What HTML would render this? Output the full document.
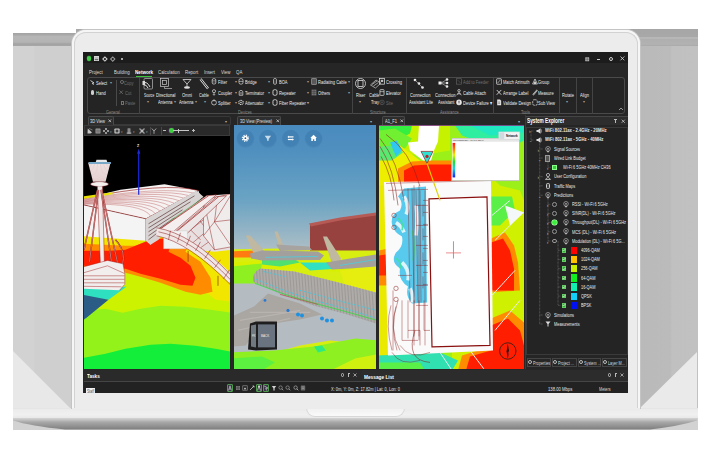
<!DOCTYPE html>
<html><head><meta charset="utf-8">
<style>
*{box-sizing:border-box;margin:0;padding:0}
html,body{width:710px;height:459px;overflow:hidden;background:#fff}
body{position:relative;font-family:"Liberation Sans",sans-serif}
.a{position:absolute}
.t{position:absolute;white-space:nowrap;color:#e6e6e6;font-size:5px;line-height:5px}
svg{position:absolute;overflow:visible}
</style></head><body>

<div class="a" style="left:13px;top:33.2px;width:75px;height:397px;background:linear-gradient(90deg,#d2d2d2 0,#d2d2d2 28%,#cfcfcf 29%,#cfcfcf 100%)"></div>
<div class="a" style="left:13px;top:33.2px;width:75px;height:13px;background:linear-gradient(180deg,#a3a3a3 0,#a9a9a9 15%,#b6b6b6 25%,#b4b4b4 70%,#a2a2a2 85%,#a8a8a8 100%)"></div>
<div class="a" style="left:75.5px;top:28.8px;width:12px;height:5px;background:#a9a9a9"></div>
<svg style="left:13px;top:351px" width="60" height="58"><polygon points="0,0 57,57 0,57" fill="#e8e8e8"/></svg>
<div class="a" style="left:625px;top:29px;width:73px;height:401px;background:linear-gradient(90deg,#b9b9b9 0,#bbbbbb 63%,#c0c0c0 64%,#c1c1c1 100%)"></div>
<div class="a" style="left:625px;top:29px;width:73px;height:16.5px;background:linear-gradient(180deg,#a6a6a6 0,#a8a8a8 45%,#bdbdbd 52%,#afafaf 60%,#b2b2b2 90%,#a9a9a9 100%)"></div>
<svg style="left:640px;top:352px" width="58" height="57"><polygon points="57,0 57,56 0,56" fill="#eaeaea"/></svg>
<div class="a" style="left:13px;top:407.5px;width:685px;height:11.5px;background:linear-gradient(180deg,#e2e2e2 0,#ececec 15%,#f0f0f0 60%,#e6e6e6 100%)"></div>
<div class="a" style="left:13px;top:419px;width:685px;height:11px;background:#d2d2d2"></div>
<svg style="left:0;top:0" width="710" height="459"><defs><linearGradient id="bg1" x1="0" y1="0" x2="0" y2="1"><stop offset="0" stop-color="#cccccc"/><stop offset="0.3" stop-color="#a8a8a8"/><stop offset="1" stop-color="#7e7e7e"/></linearGradient></defs>
<path d="M13,419 H697 V420.5 Q680,426 650,429.5 H65 Q30,426 13,420.5 Z" fill="url(#bg1)"/></svg>
<div class="a" style="left:13px;top:418.3px;width:685px;height:0.9px;background:#d0d0d0"></div>
<div class="a" style="left:306px;top:408px;width:98.5px;height:8.5px;background:linear-gradient(180deg,#f0f0f0,#fafafa);border:0.6px solid #d8d8d8;border-top:none;border-radius:0 0 9px 9px"></div>
<div class="a" style="left:71px;top:29px;width:570px;height:380px;background:#ececec;border:1px solid #c4c4c4;border-bottom:none;border-radius:15px 15px 0 0"></div>
<div class="a" style="left:72px;top:30px;width:568px;height:378px;border:2px solid #f6f6f6;border-bottom:none;border-radius:14px 14px 0 0"></div>
<div class="a" style="left:74px;top:32px;width:564px;height:376px;border:0.8px solid #d2d2d2;border-bottom:none;border-radius:12px 12px 0 0"></div>
<div class="a" style="left:83px;top:52px;width:545px;height:341px;background:#232323"></div>
<div class="a" style="left:83px;top:52px;width:545px;height:11px;background:#1c1c1c;"></div><div class="a" style="left:83px;top:63px;width:545px;height:51px;background:#262626;"></div>
<div class="a" style="left:86.6px;top:56.4px;width:4.8px;height:4.8px;border-radius:50%;background:#44d04c;box-shadow:0 0 0 0.4px #2a6a2a"></div>
<div class="a" style="left:94.3px;top:56px;width:4.3px;height:5.3px;background:#bdbdbd;border-radius:0.5px;box-shadow:inset 0 0 0 0.7px #e0e0e0, inset 0 -1.6px 0 0.2px #555"></div>
<div class="a" style="left:102.6px;top:56.8px;width:3.8px;height:3.8px;border:1px solid #d8d8d8;transform:rotate(45deg)"></div>
<div class="a" style="left:110.8px;top:57px;width:3.5px;height:3.5px;border:0.8px solid #9a9a9a;transform:rotate(45deg)"></div>
<div class="a" style="left:121px;top:58px;width:1.5px;height:1.5px;background:#aaa"></div>
<svg style="left:584.5px;top:56.8px" width="4.5" height="4.5"><rect x="0.2" y="0.2" width="4" height="4" rx="0.5" fill="#b0b0b0"/><path d="M0.2,2.2 H4.2 M2.2,0.2 V4.2" stroke="#333" stroke-width="0.4"/></svg>
<div class="a" style="left:596.5px;top:58.5px;width:3px;height:0.8px;background:#ccc"></div>
<div class="a" style="left:608.6px;top:56.8px;width:4.2px;height:4.2px;border:1.1px solid #d0d0d0;border-radius:50%"></div>
<svg style="left:620.1px;top:56.4px" width="4.8" height="4.8" viewBox="-2.4 -2.4 4.8 4.8"><path d="M-1.9,-1.9 L1.9,1.9 M1.9,-1.9 L-1.9,1.9" stroke="#ddd" stroke-width="0.8"/></svg><div class="t" style="left:89px;top:68.50px;font-size:6.20px;line-height:6.20px;color:#dcdcdc;transform:scaleX(0.710);transform-origin:0 50%;">Project</div><div class="t" style="left:114px;top:68.50px;font-size:6.20px;line-height:6.20px;color:#dcdcdc;transform:scaleX(0.710);transform-origin:0 50%;">Building</div><div class="t" style="left:158px;top:68.50px;font-size:6.20px;line-height:6.20px;color:#dcdcdc;transform:scaleX(0.710);transform-origin:0 50%;">Calculation</div><div class="t" style="left:185px;top:68.50px;font-size:6.20px;line-height:6.20px;color:#dcdcdc;transform:scaleX(0.710);transform-origin:0 50%;">Report</div><div class="t" style="left:204px;top:68.50px;font-size:6.20px;line-height:6.20px;color:#dcdcdc;transform:scaleX(0.710);transform-origin:0 50%;">Insert</div><div class="t" style="left:221px;top:68.50px;font-size:6.20px;line-height:6.20px;color:#dcdcdc;transform:scaleX(0.710);transform-origin:0 50%;">View</div><div class="t" style="left:236px;top:68.50px;font-size:6.20px;line-height:6.20px;color:#dcdcdc;transform:scaleX(0.710);transform-origin:0 50%;">QA</div><div class="t" style="left:135px;top:68.50px;font-size:6.20px;line-height:6.20px;color:#ffffff;font-weight:bold;transform:scaleX(0.745);transform-origin:0 50%;">Network</div><div class="a" style="left:135.5px;top:75.6px;width:16px;height:1.1px;background:#3cc43c;"></div><div class="a" style="left:87px;top:77px;width:538px;height:37.3px;background:#242424;border:0.9px solid #4a4a4a;border-radius:3px;"></div><div class="a" style="left:138.5px;top:78px;width:0.8px;height:35.5px;background:#444;"></div><div class="a" style="left:352px;top:78px;width:0.8px;height:35.5px;background:#444;"></div><div class="a" style="left:406px;top:78px;width:0.8px;height:35.5px;background:#444;"></div><div class="a" style="left:492.5px;top:78px;width:0.8px;height:35.5px;background:#444;"></div><div class="a" style="left:559px;top:78px;width:0.8px;height:35.5px;background:#444;"></div><div class="a" style="left:576px;top:78px;width:0.8px;height:35.5px;background:#444;"></div><div class="a" style="left:592px;top:78px;width:0.8px;height:35.5px;background:#444;"></div><div class="a" style="left:116px;top:80px;width:0.8px;height:26px;background:#4a4a4a;"></div><svg style="left:90px;top:80px" width="5" height="5"><path d="M0.5,0.5 L4,3 L2.3,3.2 L3.5,4.8" fill="none" stroke="#ddd" stroke-width="0.9"/></svg><div class="t" style="left:95.5px;top:80.55px;font-size:5.70px;line-height:5.70px;color:#ececec;transform:scaleX(0.710);transform-origin:0 50%;">Select</div><div class="t" style="left:109.5px;top:81.68px;font-size:3.5px;line-height:3.5px;letter-spacing:-0.15px;color:#9a9a9a;">&#9662;</div><div class="a" style="left:90.5px;top:90px;width:3.5px;height:4.5px;border-radius:1.5px;background:#d0d0d0"></div><div class="t" style="left:96px;top:90.85px;font-size:5.70px;line-height:5.70px;color:#ececec;transform:scaleX(0.710);transform-origin:0 50%;">Hand</div><div class="a" style="left:120px;top:80px;width:3.8px;height:3.8px;border:0.8px solid #707070;border-radius:50%;"></div><div class="t" style="left:124px;top:80.55px;font-size:5.70px;line-height:5.70px;color:#707070;transform:scaleX(0.710);transform-origin:0 50%;">Copy</div><svg style="left:119.3px;top:90.0px" width="4.4" height="4.4" viewBox="-2.2 -2.2 4.4 4.4"><path d="M-1.7,-1.7 L1.7,1.7 M1.7,-1.7 L-1.7,1.7" stroke="#707070" stroke-width="0.8"/></svg><div class="t" style="left:125px;top:90.85px;font-size:5.70px;line-height:5.70px;color:#707070;transform:scaleX(0.710);transform-origin:0 50%;">Cut</div><div class="a" style="left:120.5px;top:100.8px;width:3.5px;height:3.8px;border:0.8px solid #707070;"></div><div class="t" style="left:125px;top:101.25px;font-size:5.70px;line-height:5.70px;color:#707070;transform:scaleX(0.710);transform-origin:0 50%;">Paste</div><div class="t" style="left:106px;top:109.67px;font-size:5.46px;line-height:5.46px;color:#8a8a8a;transform:scaleX(0.710);transform-origin:0 50%;">General</div><svg style="left:142px;top:78px" width="11" height="12"><rect x="2" y="0.5" width="8.5" height="10.5" rx="1" fill="none" stroke="#bbb" stroke-width="0.7"/><path d="M1,5 Q5,3 8,9 M2,7 Q4,6 6,10" fill="none" stroke="#e0e0e0" stroke-width="1"/><rect x="0.5" y="3" width="2.5" height="4" fill="#ddd"/></svg><div class="t" style="left:143.9px;top:93.35px;font-size:5.70px;line-height:5.70px;color:#ececec;transform:scaleX(0.570);transform-origin:0 50%;">Source</div><div class="t" style="left:146.5px;top:100.68px;font-size:3.5px;line-height:3.5px;letter-spacing:-0.15px;color:#9a9a9a;">&#9662;</div><svg style="left:160px;top:78px" width="14" height="12"><rect x="0.5" y="0.5" width="8" height="8" fill="none" stroke="#ccc" stroke-width="0.7"/><rect x="2.5" y="2.5" width="4" height="4" fill="none" stroke="#ccc" stroke-width="0.7"/><path d="M4.5,8.5 V10.5 H12" stroke="#bbb" stroke-width="0.7" fill="none"/></svg><div class="t" style="left:156.4px;top:93.35px;font-size:5.70px;line-height:5.70px;color:#ececec;transform:scaleX(0.727);transform-origin:0 50%;">Directional</div><div class="t" style="left:157.5px;top:99.55px;font-size:5.70px;line-height:5.70px;color:#ececec;transform:scaleX(0.682);transform-origin:0 50%;">Antenna</div><div class="t" style="left:174px;top:100.68px;font-size:3.5px;line-height:3.5px;letter-spacing:-0.15px;color:#9a9a9a;">&#9662;</div><svg style="left:182px;top:78px" width="11" height="12"><path d="M1,1.5 H9 L5,6 Z" fill="none" stroke="#ddd" stroke-width="0.8"/><path d="M5,6 V9" stroke="#ddd" stroke-width="0.8"/><ellipse cx="5" cy="9.5" rx="3" ry="1.3" fill="#ddd"/></svg><div class="t" style="left:181.5px;top:93.35px;font-size:5.70px;line-height:5.70px;color:#ececec;transform:scaleX(0.734);transform-origin:0 50%;">Omni</div><div class="t" style="left:178.5px;top:99.55px;font-size:5.70px;line-height:5.70px;color:#ececec;transform:scaleX(0.682);transform-origin:0 50%;">Antenna</div><div class="t" style="left:195px;top:100.68px;font-size:3.5px;line-height:3.5px;letter-spacing:-0.15px;color:#9a9a9a;">&#9662;</div><svg style="left:199px;top:78px" width="11" height="12"><path d="M1.5,1 L9,10.5" stroke="#ddd" stroke-width="2.4"/><path d="M1.5,1 L9,10.5" stroke="#262626" stroke-width="1"/></svg><div class="t" style="left:199.3px;top:93.35px;font-size:5.70px;line-height:5.70px;color:#ececec;transform:scaleX(0.671);transform-origin:0 50%;">Cable</div><div class="t" style="left:203.5px;top:100.68px;font-size:3.5px;line-height:3.5px;letter-spacing:-0.15px;color:#9a9a9a;">&#9662;</div><svg style="left:210.9px;top:78.1px" width="6" height="7" viewBox="0 0 5 5.8"><rect x="1" y="0.5" width="3" height="4.5" rx="1.2" fill="none" stroke="#dedede" stroke-width="0.6"/><path d="M1,2 H4 M1,3.3 H4" stroke="#c0c0c0" stroke-width="0.4"/></svg><div class="t" style="left:218px;top:80.05px;font-size:5.70px;line-height:5.70px;color:#ececec;transform:scaleX(0.710);transform-origin:0 50%;">Filter</div><div class="t" style="left:235px;top:81.18px;font-size:3.5px;line-height:3.5px;letter-spacing:-0.15px;color:#9a9a9a;">&#9662;</div><svg style="left:210.9px;top:88.6px" width="6" height="7" viewBox="0 0 5 5.8"><circle cx="2.5" cy="1.8" r="1.3" fill="none" stroke="#dedede" stroke-width="0.6"/><path d="M2.5,3 V5.2 M1.5,4.2 L2.5,5.2 L3.5,4.2" stroke="#dedede" stroke-width="0.5" fill="none"/></svg><div class="t" style="left:218px;top:90.55px;font-size:5.70px;line-height:5.70px;color:#ececec;transform:scaleX(0.710);transform-origin:0 50%;">Coupler</div><div class="t" style="left:235px;top:91.68px;font-size:3.5px;line-height:3.5px;letter-spacing:-0.15px;color:#9a9a9a;">&#9662;</div><svg style="left:210.9px;top:98.89999999999999px" width="6" height="7" viewBox="0 0 5 5.8"><circle cx="2.5" cy="3" r="2" fill="none" stroke="#dedede" stroke-width="0.6"/><path d="M2.5,0.3 V2" stroke="#dedede" stroke-width="0.6"/></svg><div class="t" style="left:218px;top:100.85px;font-size:5.70px;line-height:5.70px;color:#ececec;transform:scaleX(0.710);transform-origin:0 50%;">Splitter</div><div class="t" style="left:235px;top:101.98px;font-size:3.5px;line-height:3.5px;letter-spacing:-0.15px;color:#9a9a9a;">&#9662;</div><svg style="left:238.4px;top:78.1px" width="6" height="7" viewBox="0 0 5 5.8"><rect x="0.8" y="0.5" width="3.4" height="4.6" rx="1.5" fill="none" stroke="#dedede" stroke-width="0.6"/><path d="M0.8,2.8 H4.2" stroke="#dedede" stroke-width="0.5"/></svg><div class="t" style="left:245px;top:80.05px;font-size:5.70px;line-height:5.70px;color:#ececec;transform:scaleX(0.710);transform-origin:0 50%;">Bridge</div><div class="t" style="left:268px;top:81.18px;font-size:3.5px;line-height:3.5px;letter-spacing:-0.15px;color:#9a9a9a;">&#9662;</div><svg style="left:238.4px;top:88.6px" width="6" height="7" viewBox="0 0 5 5.8"><path d="M1,5.2 V2 Q2.5,0 4,2 V5.2 Z" fill="none" stroke="#dedede" stroke-width="0.6"/><path d="M2.5,2.5 V4.5" stroke="#dedede" stroke-width="0.6"/></svg><div class="t" style="left:245px;top:90.55px;font-size:5.70px;line-height:5.70px;color:#ececec;transform:scaleX(0.710);transform-origin:0 50%;">Terminator</div><div class="t" style="left:268px;top:91.68px;font-size:3.5px;line-height:3.5px;letter-spacing:-0.15px;color:#9a9a9a;">&#9662;</div><svg style="left:238.4px;top:98.89999999999999px" width="6" height="7" viewBox="0 0 5 5.8"><circle cx="2.5" cy="2.8" r="1.8" fill="none" stroke="#dedede" stroke-width="0.9" stroke-dasharray="0.8,0.5"/><circle cx="2.5" cy="2.8" r="0.6" fill="#dedede"/></svg><div class="t" style="left:245px;top:100.85px;font-size:5.70px;line-height:5.70px;color:#ececec;transform:scaleX(0.710);transform-origin:0 50%;">Attenuator</div><div class="t" style="left:268px;top:101.98px;font-size:3.5px;line-height:3.5px;letter-spacing:-0.15px;color:#9a9a9a;">&#9662;</div><svg style="left:272.40000000000003px;top:78.1px" width="6" height="7" viewBox="0 0 5 5.8"><rect x="1.3" y="0.4" width="2.4" height="4.8" rx="1" fill="none" stroke="#dedede" stroke-width="0.6"/><path d="M2.5,1.5 V4" stroke="#dedede" stroke-width="0.4" stroke-dasharray="0.5,0.5"/></svg><div class="t" style="left:279px;top:80.05px;font-size:5.70px;line-height:5.70px;color:#ececec;transform:scaleX(0.710);transform-origin:0 50%;">BOA</div><div class="t" style="left:307px;top:81.18px;font-size:3.5px;line-height:3.5px;letter-spacing:-0.15px;color:#9a9a9a;">&#9662;</div><svg style="left:272.40000000000003px;top:88.6px" width="6" height="7" viewBox="0 0 5 5.8"><rect x="0.8" y="0.6" width="3.4" height="4.6" rx="1.2" fill="none" stroke="#e4e4e4" stroke-width="0.7"/></svg><div class="t" style="left:279px;top:90.55px;font-size:5.70px;line-height:5.70px;color:#ececec;transform:scaleX(0.710);transform-origin:0 50%;">Repeater</div><div class="t" style="left:307px;top:91.68px;font-size:3.5px;line-height:3.5px;letter-spacing:-0.15px;color:#9a9a9a;">&#9662;</div><svg style="left:272.40000000000003px;top:98.89999999999999px" width="6" height="7" viewBox="0 0 5 5.8"><rect x="0.8" y="0.6" width="3.4" height="4.6" rx="1.2" fill="none" stroke="#e4e4e4" stroke-width="0.7"/></svg><div class="t" style="left:279px;top:100.85px;font-size:5.70px;line-height:5.70px;color:#ececec;transform:scaleX(0.710);transform-origin:0 50%;">Fiber Repeater</div><div class="t" style="left:307px;top:101.98px;font-size:3.5px;line-height:3.5px;letter-spacing:-0.15px;color:#9a9a9a;">&#9662;</div><svg style="left:311.40000000000003px;top:78.1px" width="6" height="7" viewBox="0 0 5 5.8"><rect x="0.6" y="0.6" width="3.8" height="4.6" fill="none" stroke="#c0c0c0" stroke-width="0.5"/><path d="M1.5,0.6 V5.2 M2.5,0.6 V5.2 M3.5,0.6 V5.2" stroke="#c0c0c0" stroke-width="0.4"/></svg><div class="t" style="left:318px;top:80.05px;font-size:5.70px;line-height:5.70px;color:#ececec;transform:scaleX(0.710);transform-origin:0 50%;">Radiating Cable</div><div class="t" style="left:348px;top:81.18px;font-size:3.5px;line-height:3.5px;letter-spacing:-0.15px;color:#9a9a9a;">&#9662;</div><svg style="left:311.40000000000003px;top:88.6px" width="6" height="7" viewBox="0 0 5 5.8"><rect x="0.5" y="0.5" width="4" height="4.8" fill="#777"/><path d="M0.5,2 H4.5 M0.5,3.5 H4.5 M2.5,0.5 V5.3" stroke="#333" stroke-width="0.4"/></svg><div class="t" style="left:318px;top:90.55px;font-size:5.70px;line-height:5.70px;color:#ececec;transform:scaleX(0.710);transform-origin:0 50%;">Others</div><div class="t" style="left:348px;top:91.68px;font-size:3.5px;line-height:3.5px;letter-spacing:-0.15px;color:#9a9a9a;">&#9662;</div><svg style="left:379.40000000000003px;top:78.1px" width="6" height="7" viewBox="0 0 5 5.8"><rect x="0.5" y="0.5" width="4" height="4.6" fill="none" stroke="#e4e4e4" stroke-width="0.6"/><rect x="1.5" y="1.5" width="2" height="1.8" fill="#c0c0c0"/></svg><div class="t" style="left:386px;top:80.05px;font-size:5.70px;line-height:5.70px;color:#ececec;transform:scaleX(0.710);transform-origin:0 50%;">Crossing</div><svg style="left:379.40000000000003px;top:88.6px" width="6" height="7" viewBox="0 0 5 5.8"><rect x="0.8" y="0.5" width="3.4" height="4.8" rx="0.6" fill="none" stroke="#e4e4e4" stroke-width="0.6"/><path d="M0.8,2.2 H4.2" stroke="#e4e4e4" stroke-width="0.5"/></svg><div class="t" style="left:386px;top:90.55px;font-size:5.70px;line-height:5.70px;color:#ececec;transform:scaleX(0.710);transform-origin:0 50%;">Elevator</div><svg style="left:379.40000000000003px;top:98.89999999999999px" width="6" height="7" viewBox="0 0 5 5.8"><circle cx="2.5" cy="2.8" r="1.9" fill="none" stroke="#666" stroke-width="0.5"/><path d="M2.5,1.8 V3.8 M1.5,2.8 H3.5" stroke="#666" stroke-width="0.4"/></svg><div class="t" style="left:386px;top:100.85px;font-size:5.70px;line-height:5.70px;color:#707070;transform:scaleX(0.710);transform-origin:0 50%;">Site</div><svg style="left:456.40000000000003px;top:78.1px" width="6" height="7" viewBox="0 0 5 5.8"><rect x="0.5" y="0.6" width="4" height="4.5" fill="none" stroke="#666" stroke-width="0.5"/><path d="M1.2,1.5 L3.8,4.2" stroke="#666" stroke-width="0.4"/></svg><div class="t" style="left:462.5px;top:80.05px;font-size:5.70px;line-height:5.70px;color:#707070;transform:scaleX(0.710);transform-origin:0 50%;">Add to Feeder</div><svg style="left:456.40000000000003px;top:88.6px" width="6" height="7" viewBox="0 0 5 5.8"><circle cx="2.5" cy="1.4" r="1" fill="none" stroke="#e4e4e4" stroke-width="0.6"/><path d="M0.5,5.2 L2.5,2.8 L4.5,5.2 M1.2,4 H3.8" stroke="#e4e4e4" stroke-width="0.6" fill="none"/></svg><div class="t" style="left:462.5px;top:90.55px;font-size:5.70px;line-height:5.70px;color:#ececec;transform:scaleX(0.710);transform-origin:0 50%;">Cable Attach</div><svg style="left:456.40000000000003px;top:98.89999999999999px" width="6" height="7" viewBox="0 0 5 5.8"><circle cx="2.5" cy="2.8" r="2.3" fill="#e8e8e8"/><path d="M2.5,1.5 V3.2 M2.5,3.9 V4.3" stroke="#222" stroke-width="0.7"/></svg><div class="t" style="left:462.5px;top:100.85px;font-size:5.70px;line-height:5.70px;color:#ececec;transform:scaleX(0.710);transform-origin:0 50%;">Device Failure &#9662;</div><svg style="left:496.40000000000003px;top:78.1px" width="6" height="7" viewBox="0 0 5 5.8"><rect x="0.5" y="0.6" width="4" height="4.6" rx="0.5" fill="none" stroke="#e4e4e4" stroke-width="0.6"/><path d="M1.3,4.3 L3.7,1.5" stroke="#e4e4e4" stroke-width="0.5"/></svg><div class="t" style="left:503px;top:80.05px;font-size:5.70px;line-height:5.70px;color:#ececec;transform:scaleX(0.710);transform-origin:0 50%;">Match Azimuth</div><svg style="left:496.40000000000003px;top:88.6px" width="6" height="7" viewBox="0 0 5 5.8"><path d="M0.6,0.8 L4.4,4.8 M4.4,0.8 L0.6,4.8" stroke="#e4e4e4" stroke-width="0.7"/></svg><div class="t" style="left:503px;top:90.55px;font-size:5.70px;line-height:5.70px;color:#ececec;transform:scaleX(0.710);transform-origin:0 50%;">Arrange Label</div><svg style="left:496.40000000000003px;top:98.89999999999999px" width="6" height="7" viewBox="0 0 5 5.8"><path d="M1,0.5 H3.3 L4.3,1.5 V5.2 H1 Z" fill="#e4e4e4"/><path d="M1.8,2.5 H3.5 M1.8,3.6 H3.5" stroke="#333" stroke-width="0.4"/></svg><div class="t" style="left:503px;top:100.85px;font-size:5.70px;line-height:5.70px;color:#ececec;transform:scaleX(0.710);transform-origin:0 50%;">Validate Design</div><svg style="left:531.6px;top:78.1px" width="6" height="7" viewBox="0 0 5 5.8"><path d="M0.5,5 L2.5,0.8 L4.5,5 Z" fill="none" stroke="#e4e4e4" stroke-width="0.6"/><rect x="1.8" y="3" width="1.4" height="2" fill="#e4e4e4"/></svg><div class="t" style="left:538px;top:80.05px;font-size:5.70px;line-height:5.70px;color:#ececec;transform:scaleX(0.710);transform-origin:0 50%;">Group</div><svg style="left:531.6px;top:88.6px" width="6" height="7" viewBox="0 0 5 5.8"><path d="M0.8,5 L4.4,0.8" stroke="#e4e4e4" stroke-width="1.2"/><path d="M0.8,5 L4.4,0.8" stroke="#262626" stroke-width="0.4"/></svg><div class="t" style="left:538px;top:90.55px;font-size:5.70px;line-height:5.70px;color:#ececec;transform:scaleX(0.710);transform-origin:0 50%;">Measure</div><svg style="left:531.6px;top:98.89999999999999px" width="6" height="7" viewBox="0 0 5 5.8"><rect x="0.6" y="0.6" width="3.8" height="4.6" rx="1.2" fill="none" stroke="#e4e4e4" stroke-width="0.6" stroke-dasharray="2,0.6"/></svg><div class="t" style="left:538px;top:100.85px;font-size:5.70px;line-height:5.70px;color:#ececec;transform:scaleX(0.710);transform-origin:0 50%;">Sub View</div><div class="t" style="left:307px;top:102.38px;font-size:3.5px;line-height:3.5px;letter-spacing:-0.15px;color:#9a9a9a;">&#9662;</div><div class="t" style="left:238px;top:109.67px;font-size:5.46px;line-height:5.46px;color:#8a8a8a;transform:scaleX(0.710);transform-origin:0 50%;">Devices</div><svg style="left:355px;top:78px" width="12" height="12"><circle cx="5.5" cy="5.5" r="5" fill="none" stroke="#ddd" stroke-width="0.8"/><rect x="3" y="2.5" width="5" height="6" fill="none" stroke="#ddd" stroke-width="0.8"/></svg><div class="t" style="left:356px;top:93.35px;font-size:5.70px;line-height:5.70px;color:#ececec;transform:scaleX(0.710);transform-origin:0 50%;">Riser</div><div class="t" style="left:359px;top:100.68px;font-size:3.5px;line-height:3.5px;letter-spacing:-0.15px;color:#9a9a9a;">&#9662;</div><svg style="left:370px;top:79px" width="12" height="10"><path d="M0.5,6 L6,1 L11,4 L5.5,9 Z M2,5.5 L7,2 M3.5,7 L8.5,3.5" fill="none" stroke="#ccc" stroke-width="0.7"/></svg><div class="t" style="left:368.5px;top:93.35px;font-size:5.70px;line-height:5.70px;color:#ececec;transform:scaleX(0.710);transform-origin:0 50%;">Cable</div><div class="t" style="left:370.5px;top:99.55px;font-size:5.70px;line-height:5.70px;color:#ececec;transform:scaleX(0.710);transform-origin:0 50%;">Tray</div><div class="t" style="left:370px;top:109.67px;font-size:5.46px;line-height:5.46px;color:#8a8a8a;transform:scaleX(0.710);transform-origin:0 50%;">Structure</div><svg style="left:413px;top:78px" width="12" height="12"><circle cx="2" cy="2" r="1.3" fill="#eee"/><circle cx="6" cy="5.5" r="1.3" fill="#eee"/><circle cx="9.5" cy="9.5" r="1.3" fill="#eee"/><path d="M2,2 L9.5,9.5" stroke="#ccc" stroke-width="0.6"/></svg><div class="t" style="left:410px;top:93.35px;font-size:5.70px;line-height:5.70px;color:#ececec;transform:scaleX(0.710);transform-origin:0 50%;">Connection</div><div class="t" style="left:408.5px;top:99.55px;font-size:5.70px;line-height:5.70px;color:#ececec;transform:scaleX(0.710);transform-origin:0 50%;">Assistant Lite</div><svg style="left:438px;top:78px" width="13" height="12"><rect x="0.5" y="3.5" width="3" height="3" fill="#eee"/><circle cx="9" cy="1.5" r="1.3" fill="#eee"/><circle cx="9" cy="5" r="1.3" fill="#eee"/><circle cx="9" cy="8.5" r="1.3" fill="#eee"/><path d="M3,5 L9,1.5 M3,5 L9,5 M3,5 L9,8.5" stroke="#ccc" stroke-width="0.6"/></svg><div class="t" style="left:434.5px;top:93.35px;font-size:5.70px;line-height:5.70px;color:#ececec;transform:scaleX(0.710);transform-origin:0 50%;">Connection</div><div class="t" style="left:437.5px;top:99.55px;font-size:5.70px;line-height:5.70px;color:#ececec;transform:scaleX(0.710);transform-origin:0 50%;">Assistant</div><div class="t" style="left:440px;top:109.67px;font-size:5.46px;line-height:5.46px;color:#8a8a8a;transform:scaleX(0.710);transform-origin:0 50%;">Assistance</div><div class="t" style="left:521px;top:109.67px;font-size:5.46px;line-height:5.46px;color:#8a8a8a;transform:scaleX(0.710);transform-origin:0 50%;">Tools</div><div class="t" style="left:561.5px;top:93.35px;font-size:5.70px;line-height:5.70px;color:#ececec;transform:scaleX(0.710);transform-origin:0 50%;">Rotate</div><div class="t" style="left:566px;top:100.68px;font-size:3.5px;line-height:3.5px;letter-spacing:-0.15px;color:#9a9a9a;">&#9662;</div><div class="t" style="left:579.5px;top:93.35px;font-size:5.70px;line-height:5.70px;color:#ececec;transform:scaleX(0.710);transform-origin:0 50%;">Align</div><div class="t" style="left:583px;top:100.68px;font-size:3.5px;line-height:3.5px;letter-spacing:-0.15px;color:#9a9a9a;">&#9662;</div><svg style="left:618px;top:107px" width="6" height="4"><path d="M1,3 L3,1 L5,3" stroke="#ccc" stroke-width="0.7" fill="none"/></svg><div class="a" style="left:83px;top:114px;width:545px;height:255px;background:#262626;"></div><div class="a" style="left:112px;top:116px;width:119px;height:8.5px;background:#242424;border:0.8px solid #383838;border-radius:2px 2px 0 0;"></div><div class="a" style="left:87.5px;top:116px;width:26px;height:9px;background:#2e2e2e;border:0.8px solid #4a4a4a;border-bottom:none;border-radius:2px 2px 0 0;"></div><div class="t" style="left:90px;top:119.05px;font-size:5.70px;line-height:5.70px;color:#e0e0e0;transform:scaleX(0.710);transform-origin:0 50%;">3D View</div><svg style="left:108.4px;top:118.7px" width="3.6" height="3.6" viewBox="-1.8 -1.8 3.6 3.6"><path d="M-1.3,-1.3 L1.3,1.3 M1.3,-1.3 L-1.3,1.3" stroke="#ddd" stroke-width="0.7"/></svg><div class="t" style="left:224.5px;top:119.67px;font-size:4px;line-height:4px;letter-spacing:0px;color:#aaa;">&#9662;</div><div class="a" style="left:83.5px;top:124.8px;width:146.8px;height:11.5px;background:#2a2a2a;border:0.8px solid #3a3a3a;"></div><svg style="left:86.8px;top:127.5px" width="6" height="6" viewBox="-3 -3 6 6"><path d="M-2.2,-2.5 L2,1.5 L0.5,2.5 L-2.5,2.5 Z" fill="#c8c8c8"/><path d="M-1,-2.5 L2.5,-1" stroke="#aaa" stroke-width="0.6"/></svg><svg style="left:94.6px;top:127.5px" width="6" height="6" viewBox="-3 -3 6 6"><rect x="-2.5" y="-2.5" width="5" height="5" rx="0.6" fill="#9a9a9a"/><path d="M-1.8,-0.8 H1.8 M-1.8,0.9 H1.8" stroke="#333" stroke-width="0.5"/></svg><svg style="left:102.5px;top:127.5px" width="6" height="6" viewBox="-3 -3 6 6"><circle cx="0" cy="-2" r="0.9" fill="#ccc"/><circle cx="0" cy="2" r="0.9" fill="#ccc"/><circle cx="-2" cy="0" r="0.9" fill="#ccc"/><circle cx="2" cy="0" r="0.9" fill="#ccc"/></svg><div class="t" style="left:109.7px;top:130.67px;font-size:3.2px;line-height:3.2px;letter-spacing:0px;color:#999;">&#9662;</div><svg style="left:113.8px;top:127.5px" width="6" height="6" viewBox="-3 -3 6 6"><rect x="-2.6" y="-2.6" width="5.2" height="5.2" rx="0.8" fill="#c8c8c8"/><rect x="-1.4" y="-1.4" width="2.8" height="2.8" fill="#444"/></svg><div class="t" style="left:121.0px;top:130.67px;font-size:3.2px;line-height:3.2px;letter-spacing:0px;color:#999;">&#9662;</div><svg style="left:126.19999999999999px;top:127.5px" width="6" height="6" viewBox="-3 -3 6 6"><rect x="-1.5" y="-2.8" width="3" height="5.6" rx="0.5" fill="#8a8a8a"/><rect x="-2.3" y="1.5" width="4.6" height="1.2" fill="#aaa"/></svg><div class="t" style="left:133.39999999999998px;top:130.67px;font-size:3.2px;line-height:3.2px;letter-spacing:0px;color:#999;">&#9662;</div><svg style="left:138.6px;top:127.5px" width="6" height="6" viewBox="-3 -3 6 6"><path d="M-2.5,-2.5 L2.5,2.5 M2.5,-2.5 L-2.5,2.5" stroke="#9a9a9a" stroke-width="1.3"/><rect x="-1.2" y="-1.2" width="2.4" height="2.4" fill="#bbb"/></svg><div class="t" style="left:145.79999999999998px;top:130.67px;font-size:3.2px;line-height:3.2px;letter-spacing:0px;color:#999;">&#9662;</div><svg style="left:151px;top:127.5px" width="6" height="6" viewBox="-3 -3 6 6"><path d="M-2.2,-2.5 L0,0 L2.2,-2.5 M0,0 V2.8" stroke="#aaa" stroke-width="0.9" fill="none"/></svg><div class="a" style="left:149.5px;top:126.5px;width:0.8px;height:8px;background:#484848;"></div><div class="a" style="left:160.5px;top:126.5px;width:0.8px;height:8px;background:#484848;"></div><div class="a" style="left:162.5px;top:130.2px;width:3px;height:0.8px;background:#bbb;"></div><div class="a" style="left:169px;top:128.3px;width:4.6px;height:4.6px;background:#3dd23d;border-radius:50%;box-shadow:0 0 0 0.6px #5a2a6a;"></div><div class="a" style="left:173px;top:130.1px;width:16px;height:1px;background:#c8c8c8;"></div><div class="a" style="left:178px;top:128.5px;width:0.9px;height:4px;background:#c8c8c8;"></div><div class="a" style="left:191.5px;top:130.1px;width:3.4px;height:0.8px;background:#bbb;"></div><div class="a" style="left:192.8px;top:128.7px;width:0.8px;height:3.4px;background:#bbb;"></div><div class="a" style="left:83.5px;top:136.2px;width:146.8px;height:232.8px;background:#000;"></div><svg style="left:83.5px;top:136.2px;overflow:hidden" width="146.8" height="232.8" viewBox="83.5 136.2 146.8 232.8"><rect x="83" y="136" width="149" height="234" fill="#000"/><polygon points="83,236 231,195 231,370 83,370" fill="#12ee3a" /><polygon points="83,236 231,195 231,352 215,349 195,346 170,344 150,345 125,349 105,354 83,358" fill="#93f21a" /><polygon points="83,236 231,195 231,313 210,310 185,307 160,306 140,309 122,313 105,309 83,311" fill="#cdf200" /><polygon points="175,237 231,222 231,302 215,300 205,292 195,278 185,262 175,250" fill="#f2e600" /><polygon points="83,236 145,240 135,248 83,244" fill="#f2e600" /><polygon points="83,244 125,246 135,246 150,240 175,236 190,242 185,252 200,262 210,278 212,292 200,295 185,292 160,283 140,277 125,273 83,268" fill="#ff8c00" /><polygon points="83,251 110,251 125,250 135,246 150,240 175,238 170,246 168,252 180,258 190,266 195,278 192,286 180,285 160,279 140,274 125,269 83,266" fill="#ff1e00" /><polygon points="83,287 126,287 108,300 83,297" fill="#2fe0c0" /><polygon points="83,295 108,300 86,318 83,320" fill="#2a5c86" /><polygon points="83,205 145.5,219 145.5,241 83,236.5" fill="#f4f4f4" /><polygon points="145.5,219 198,191 200,197 165,225 150,245 145.5,241" fill="#e4e4e4" /><polygon points="83,198.5 120,190 164,184.4 198,190.7 145.5,219 83,205" fill="#f6f2f2" /><path d="M83,199.1 Q161.8,186.3 193.2,193.3 M83,199.7 Q159.6,188.1 188.5,195.8 M83,200.3 Q157.5,190.0 183.7,198.4 M83,200.9 Q155.3,191.9 178.9,201.0 M83,201.5 Q153.1,193.8 174.1,203.6 M83,202.0 Q150.9,195.6 169.4,206.1 M83,202.6 Q148.7,197.5 164.6,208.7 M83,203.2 Q146.5,199.4 159.8,211.3 M83,203.8 Q144.4,201.3 155.0,213.9 M83,204.4 Q142.2,203.1 150.3,216.4 " stroke="#a01818" stroke-width="0.4" fill="none" opacity="0.75"/><path d="M83,198.5 Q164,182 198,190.7 L145.5,219 L83,205 M145.5,219 L145.5,241" stroke="#8a0a0a" stroke-width="0.6" fill="none"/><path d="M147,224 L190,200 M147,228 L186,206 M147,232 L180,213 M147,236 L172,222 M147,240 L165,230" stroke="#7a1010" stroke-width="0.5" fill="none"/><polygon points="83,196.5 112,192.5 112,194.5 83,199" fill="#e8e000" /><polygon points="145.5,219 196,191 203,197 172,222 158,240 150,245 145.5,241" fill="#d8d4d4" /><path d="M148,224 L194,196 M148,228 L190,202 M148,232 L182,210 M148,236 L174,218 M148,240 L166,226" stroke="#603838" stroke-width="0.7" fill="none"/><polygon points="158,230 206,196 231,194 231,250 214,252 195,250 175,244" fill="#e8e0e0" /><path d="M180,238 L222,205 M190,245 L225,215 M200,248 L228,228 M185,225 L200,240 M195,215 L210,235" stroke="#8a1010" stroke-width="0.45" fill="none"/><polygon points="203,200 231,194 231,247 214,250 203,236" fill="#f0ecec" /><path d="M203,200 L231,194 L231,247 L214,250 L203,236 Z M203,200 L214,250 M231,194 L214,222 L203,236 M214,222 L231,247 M217,197 L214,222 M231,220 L214,222" stroke="#8a1010" stroke-width="0.45" fill="none"/><polygon points="158,230 206,196 216,195 168,236" fill="#f4eeee" stroke="#8a1010" stroke-width="0.5"/><polygon points="170,236 216,197 226,196 180,240" fill="#ece6e6" stroke="#8a1010" stroke-width="0.5"/><path d="M160,229 L208,196 M172,235 L218,197" stroke="#a02020" stroke-width="0.9" fill="none" opacity="0.8"/><polygon points="163,231 187,231 187,249 163,249" fill="#f2f2f2" stroke="#c0b0b0" stroke-width="0.3"/><path d="M156,232 Q190,238 231,280" stroke="#f0e6e6" stroke-width="8" fill="none"/><path d="M156,228 Q192,234 231,276 M156,236 Q188,242 231,286 M158,232 Q190,238 231,281 M170,231 L168,240 M180,233 L177,242 M190,236 L186,246 M200,242 L195,251 M210,250 L204,259 M220,260 L214,268 M229,270 L223,279" stroke="#8a1010" stroke-width="0.5" fill="none"/><path d="M187.6,251 V262 M217.5,276 V286" stroke="#8a2a10" stroke-width="0.7"/><path d="M168,222 L200,200" stroke="#30d060" stroke-width="0.5" fill="none"/><polygon points="87.7,163 110,163 105,182 92.5,182" fill="#f2eeee" /><path d="M88.0,164 L92.8,182 M89.5,164 L93.6,182 M91.0,164 L94.4,182 M92.5,164 L95.2,182 M94.0,164 L96.0,182 M95.5,164 L96.8,182 M97.0,164 L97.6,182 M98.5,164 L98.4,182 M100.0,164 L99.2,182 M101.5,164 L100.0,182 M103.0,164 L100.8,182 M104.5,164 L101.6,182 M106.0,164 L102.4,182 M107.5,164 L103.2,182 M109.0,164 L104.0,182 " stroke="#b04848" stroke-width="0.3" opacity="0.55"/><polygon points="96,160 106,160 107,163 95,163" fill="#e8e8e8" /><polygon points="88,162.3 110.5,162.3 110.3,164.3 88.3,164.3" fill="#78a8c8" /><ellipse cx="99" cy="184.3" rx="9" ry="2.4" fill="#f4f0f0" stroke="#a03030" stroke-width="0.4"/><polygon points="96.8,186.5 102,186.5 104,268 100,268" fill="#f0eaea" /><path d="M96.8,186.5 L100,268 M102,186.5 L104,268" stroke="#9a2020" stroke-width="0.5"/><path d="M97,190 L83.5,250 M98,190 L89,262 M101,190 L121,281 M100.5,190 L113,276 M115,240 Q126,252 122,265" stroke="#9a1010" stroke-width="1.4" fill="none"/><path d="M97,190 L83.5,250 M98,190 L89,262 M101,190 L121,281 M100.5,190 L113,276 M115,240 Q126,252 122,265" stroke="#f0e0e0" stroke-width="0.5" fill="none"/><path d="M83,267 L107,260.6 L122.5,264 L124.3,273.7 L124.3,284.5 L119,290.5 L83,289 Z" fill="#f2eeee"/><path d="M83,267 L107,260.6 L122.5,264 L124.3,273.7 M83,273 L107,266 L124,273.7 M83,276 L124,276 M83,279.5 L124,279.5 M83,283 L124,283 M83,286.5 L121,287 M124.3,273.7 L124.3,284.5 L119,290.5" stroke="#a02020" stroke-width="0.55" fill="none" opacity="0.85"/><path d="M138.2,152 V195" stroke="#1a2ad8" stroke-width="1.2"/><polygon points="138.2,149 136.6,154 139.8,154" fill="#1a2ad8"/><text x="136.6" y="147.5" font-size="4.5" fill="#fff" font-family="Liberation Sans">z</text></svg><div class="a" style="left:236.8px;top:116px;width:44px;height:9px;background:#2e2e2e;border:0.8px solid #4a4a4a;border-bottom:none;border-radius:2px 2px 0 0;"></div><div class="t" style="left:240px;top:119.17px;font-size:5.46px;line-height:5.46px;color:#e0e0e0;transform:scaleX(0.715);transform-origin:0 50%;">3D View (Preview)</div><svg style="left:276.0px;top:118.7px" width="3.6" height="3.6" viewBox="-1.8 -1.8 3.6 3.6"><path d="M-1.3,-1.3 L1.3,1.3 M1.3,-1.3 L-1.3,1.3" stroke="#ddd" stroke-width="0.7"/></svg><div class="t" style="left:370px;top:119.67px;font-size:4px;line-height:4px;letter-spacing:0px;color:#aaa;">&#9662;</div><div class="a" style="left:234px;top:124.6px;width:142.2px;height:244.4px;background:linear-gradient(180deg,#4a8cc0 0,#5f9bc2 40%,#86b3c6 75%,#9cc0c8 100%);"></div><svg style="left:234px;top:124.6px;overflow:hidden" width="142.2" height="244.4" viewBox="234 124.6 142.2 244.4"><defs><linearGradient id="sky" x1="0" y1="0" x2="0" y2="1"><stop offset="0" stop-color="#4a8bbf"/><stop offset="0.1" stop-color="#4f8fbf"/><stop offset="0.3" stop-color="#6aa3c3"/><stop offset="0.5" stop-color="#acbec6"/><stop offset="1" stop-color="#b4c0c4"/></linearGradient></defs><rect x="233" y="124" width="145" height="250" fill="url(#sky)"/><polygon points="233,249 377,246 377,370 233,370" fill="#d8ee10" /><polygon points="233,251 255,250 262,254 250,257 233,257" fill="#ff7a10" /><polygon points="233,262 300,258 377,262 377,275 300,268 233,270" fill="#d8f000" /><polygon points="233,266 262,263 258,285 233,288" fill="#8ef020" /><polygon points="262,258 290,256 300,262 280,266 262,264" fill="#50e070" /><polygon points="300,262 330,262 340,268 310,270" fill="#30e0c0" /><polygon points="233,283 262,283 275,272 377,290 377,345 330,340 300,345 275,352 233,353" fill="#b4bcc2" /><polygon points="233,352 274,350 314,346 355,338 377,340 377,370 233,370" fill="#8ef020" /><polygon points="331,370 355,358 377,354 377,370" fill="#d0f010" /><polygon points="233,358 262,356 275,362 262,370 233,370" fill="#5cf040" /><polygon points="314,346 322,345 326,350 318,352" fill="#30e880" /><polygon points="340,270 377,265 377,300 350,300" fill="#e6ee10" /><polygon points="310,224 340,218 377,213 377,250 310,250" fill="#98423f" /><polygon points="309,223 340,217 377,212 377,215 340,220 311,226" fill="#b65a55" /><polygon points="245.8,235 250,235 264,250 262,254 254,254" fill="#c0b8a0" /><polygon points="250,253 262,250 318,251 324,255 320,259.5 262,260 251,258" fill="#a29f9c" /><polygon points="274.5,231 277.5,231 283,244 279,246" fill="#c0b8a0" /><polygon points="276,244 309,246 312,249.5 280,250.5" fill="#a6a3a0" /><polygon points="323,236 327,236 341,258 339,262 332,263" fill="#c0b8a0" /><polygon points="326,262 350,258 377,254 377,266 350,268 332,269" fill="#a29f9c" /><path d="M265,257 L318,256 M340,265 L377,259" stroke="#48d0e0" stroke-width="0.8"/><polygon points="268,293 300,303 322,314 300,319 280,322 262,325 252,335 246,345 234,346 234,315 254,306" fill="#aaa6a2" /><path d="M240,320 L300,310 M238,330 L290,318 M250,312 L310,312" stroke="#bdb9b5" stroke-width="1.2" fill="none" opacity="0.7"/><clipPath id="fus"><path d="M260.2,268.1 L294.4,271.1 L334.7,281.2 L377,292.3 L377,323.5 L344.8,313.4 L314.6,305.4 L284.4,295.3 L253.1,281.2 Q252,272 260.2,268.1 Z"/></clipPath><path d="M260.2,268.1 L294.4,271.1 L334.7,281.2 L377,292.3 L377,323.5 L344.8,313.4 L314.6,305.4 L284.4,295.3 L253.1,281.2 Q252,272 260.2,268.1 Z" fill="#aeaba8"/><g clip-path="url(#fus)"><path d="M250,262 l5,70 M253,262 l5,70 M256,262 l5,70 M259,262 l5,70 M262,262 l5,70 M265,262 l5,70 M268,262 l5,70 M271,262 l5,70 M274,262 l5,70 M277,262 l5,70 M280,262 l5,70 M283,262 l5,70 M286,262 l5,70 M289,262 l5,70 M292,262 l5,70 M295,262 l5,70 M298,262 l5,70 M301,262 l5,70 M304,262 l5,70 M307,262 l5,70 M310,262 l5,70 M313,262 l5,70 M316,262 l5,70 M319,262 l5,70 M322,262 l5,70 M325,262 l5,70 M328,262 l5,70 M331,262 l5,70 M334,262 l5,70 M337,262 l5,70 M340,262 l5,70 M343,262 l5,70 M346,262 l5,70 M349,262 l5,70 M352,262 l5,70 M355,262 l5,70 M358,262 l5,70 M361,262 l5,70 M364,262 l5,70 M367,262 l5,70 M370,262 l5,70 M373,262 l5,70 M376,262 l5,70 M379,262 l5,70 " stroke="#9a9794" stroke-width="0.9" fill="none"/></g><path d="M263,271 L285,276 M256,279 L284,290 L314,300 L345,308 L377,318 M300,290 L345,302 L377,310" stroke="#40c8e0" stroke-width="0.9" stroke-dasharray="2,1.5" fill="none"/><path d="M255,283 L285,294 L315,303 L345,311 L377,320" stroke="#30e040" stroke-width="0.8" fill="none"/><path d="M280,294 L318,304" stroke="#c04040" stroke-width="0.6" fill="none"/><circle cx="298" cy="314" r="2" fill="#2090e0"/><circle cx="302" cy="315" r="2" fill="#2090e0"/><circle cx="322" cy="318" r="2" fill="#2090e0"/><circle cx="327" cy="320" r="2" fill="#2090e0"/><circle cx="332" cy="320" r="2" fill="#2090e0"/><circle cx="288" cy="310" r="1.6" fill="#2a7ad0"/><circle cx="265" cy="300" r="1.4" fill="#2a7ad0"/><polygon points="250,323 256,321 277,321 277,349 256,350 248,349" fill="#1e1e1e" /><polygon points="251,325 256,324 256,347 251,346" fill="#707880" /><polygon points="258,324 275,324 275,347 258,347" fill="#6a7480" /><text x="252" y="337" font-size="2.6" fill="#eee" font-family="Liberation Sans">FR</text><text x="261" y="337" font-size="3" fill="#eee" font-family="Liberation Sans">BACK</text><circle cx="245.4" cy="138.6" r="8.8" fill="#3a70a0" opacity="0.25"/><circle cx="245.4" cy="137.8" r="8.2" fill="#4281b4"/><circle cx="245.4" cy="137.8" r="2.5" fill="#fff"/><circle cx="245.4" cy="137.8" r="3.1" fill="none" stroke="#fff" stroke-width="1.1" stroke-dasharray="1.2,1.25"/><circle cx="245.4" cy="137.8" r="0.9" fill="#2a5a8a"/><circle cx="267.9" cy="138.6" r="8.8" fill="#3a70a0" opacity="0.25"/><circle cx="267.9" cy="137.8" r="8.2" fill="#4281b4"/><polygon points="264.7,135.3 271.09999999999997,135.3 268.7,138.6 268.7,140.3 267.09999999999997,140.3 267.09999999999997,138.6" fill="#c8dcec"/><circle cx="290.7" cy="138.6" r="8.8" fill="#3a70a0" opacity="0.25"/><circle cx="290.7" cy="137.8" r="8.2" fill="#4281b4"/><rect x="288.5" y="135.9" width="5" height="1.2" fill="#fff"/><polygon points="287.5,136.5 288.9,135.2 288.9,137.8" fill="#fff"/><rect x="287.9" y="138.5" width="5" height="1.2" fill="#fff"/><polygon points="293.9,139.1 292.5,137.8 292.5,140.4" fill="#fff"/><circle cx="313.6" cy="138.6" r="8.8" fill="#3a70a0" opacity="0.25"/><circle cx="313.6" cy="137.8" r="8.2" fill="#4281b4"/><polygon points="313.6,134.4 316.90000000000003,137.5 315.90000000000003,137.5 315.90000000000003,140.6 314.3,140.6 314.3,138.8 312.90000000000003,138.8 312.90000000000003,140.6 311.3,140.6 311.3,137.5 310.3,137.5" fill="#fff"/></svg><div class="a" style="left:382px;top:116px;width:23px;height:9px;background:#2e2e2e;border:0.8px solid #4a4a4a;border-bottom:none;border-radius:2px 2px 0 0;"></div><div class="t" style="left:384.5px;top:119.05px;font-size:5.70px;line-height:5.70px;color:#e0e0e0;transform:scaleX(0.710);transform-origin:0 50%;">A1_F1</div><svg style="left:400.0px;top:118.7px" width="3.6" height="3.6" viewBox="-1.8 -1.8 3.6 3.6"><path d="M-1.3,-1.3 L1.3,1.3 M1.3,-1.3 L-1.3,1.3" stroke="#ddd" stroke-width="0.7"/></svg><div class="t" style="left:517.5px;top:119.67px;font-size:4px;line-height:4px;letter-spacing:0px;color:#aaa;">&#9662;</div><div class="a" style="left:379px;top:124.6px;width:145px;height:244.4px;background:#8ef21a;border-top:0.8px solid #7a2a8a;"></div><svg style="left:379px;top:124.6px;overflow:hidden" width="145" height="244.4" viewBox="379 124.6 145 244.4"><rect x="378" y="124" width="148" height="250" fill="#9af018"/><polygon points="379,125 450,125 450,150 420,155 379,150" fill="#c6f200" /><polygon points="379,125 412,125 410,133 400,138 379,140" fill="#34ee40" /><polygon points="379,130 395,128 412,138 405,148 379,146" fill="#70f030" /><polygon points="455,125 524,125 524,140 505,150 480,142 462,135" fill="#30eea0" /><polygon points="470,125 524,125 524,132 490,135" fill="#20e8c0" /><polygon points="379,150 400,145 420,160 410,183 379,190" fill="#eeee00" /><polygon points="379,146 398,145 403,152 392,160 379,160" fill="#5ae870" /><polygon points="390,142 397,140 402,150 396,156" fill="#30c8f0" /><polygon points="398,168 412,161 430,160 452,160 455,170 452,183 398,183" fill="#ff8c00" /><polygon points="404,170 414,165 430,164 452,164 452,183 404,183" fill="#ff1e00" /><polygon points="419,125 439,125 438,141 434,150 431,160 423,160 410,150 408,142 418,141" fill="#ffffff" /><polygon points="452,180 493,178 500,185 520,190 524,200 524,370 452,370" fill="#cff000" /><polygon points="490,196 512,196 515,210 500,225 490,225" fill="#5af048" /><polygon points="491,238 505,232 514,245 518,262 520,290 491,292" fill="#ff8c00" /><polygon points="491,242 503,238 510,250 514,268 514,290 491,290" fill="#ff1e00" /><polygon points="491,318 510,310 524,322 524,370 458,370 462,355 491,346" fill="#ff8c00" /><polygon points="491,325 508,318 520,330 524,345 524,370 466,370 470,356 491,350" fill="#ff1e00" /><polygon points="379,185 388,185 388,355 379,355" fill="#eaea00" /><polygon points="379,250 388,248 388,285 379,285" fill="#ff8c00" /><polygon points="379,255 386,254 386,275 379,275" fill="#ff2a00" /><polygon points="379,355 440,352 458,360 452,370 379,370" fill="#30e0b0" /><polygon points="379,362 420,362 425,370 379,370" fill="#5af048" /><polygon points="384,181.5 491,180 493,350 388,355" fill="#fafafa" /><path d="M404,188 L426,186 L427,302 L412,303 Q405,296 408,286 Q398,280 400,268 Q390,262 396,252 Q404,246 402,236 Q394,232 392,224 Q390,214 400,210 Q404,202 398,196 Z" fill="#58caee"/><path d="M404,196 Q410,206 406,214 M396,222 Q402,226 404,232 M402,262 Q410,270 408,280 M410,288 Q414,296 412,302 M416,205 Q418,220 416,235" stroke="#f4fbff" stroke-width="3.6" fill="none" opacity="0.85"/><path d="M398,218 Q404,222 402,230 M396,258 Q402,262 400,268 M412,230 Q416,245 413,260" stroke="#40e0a0" stroke-width="1.6" fill="none" opacity="0.9"/><path d="M408,188 L410,302 M412,188 L414,302 M416,190 L418,302 M420,190 L421,302 M423,200 L428,200 M423,212 L428,212 M423,224 L428,224 M423,236 L428,236 M423,248 L428,248 M423,260 L428,260 M423,272 L428,272 M423,284 L428,284 M423,204 V216 M423,228 V240 M423,252 V264 M423,276 V288" stroke="#8a1818" stroke-width="0.45" fill="none" opacity="0.9"/><polygon points="429,198.5 487,196.5 490,345 432,346.5" fill="#ffffff" stroke="#8a1010" stroke-width="1.2"/><path d="M386,183 L493,180 M388,190 L428,189 M414,185 L414,345 M419,185 L419,340 M425,190 L425,345 M393,290 L393,350 M398,300 Q388,330 400,350 M408,330 L420,330 L420,345 M398,275 L412,275 M416,205 L428,205 M416,225 L428,225 M416,245 L428,245 M416,265 L428,265 M416,285 L428,285 M416,305 L428,305" stroke="#8a1818" stroke-width="0.5" fill="none" opacity="0.85"/><circle cx="394" cy="215" r="2.2" fill="none" stroke="#8a1818" stroke-width="0.5"/><circle cx="394" cy="227" r="2.2" fill="none" stroke="#8a1818" stroke-width="0.5"/><circle cx="396" cy="288" r="2.2" fill="none" stroke="#8a1818" stroke-width="0.5"/><circle cx="396" cy="299" r="2.2" fill="none" stroke="#8a1818" stroke-width="0.5"/><path d="M391,305 Q385,325 392,350 M396,306 Q390,326 397,350 M402,300 L402,340 L418,340 M408,300 L408,338 M414,300 L414,336 M419,300 L419,336 M424,300 L424,330 L430,330 M400,345 Q410,360 430,352 M392,352 Q400,366 420,360" stroke="#8a1818" stroke-width="0.5" fill="none" opacity="0.85"/><path d="M380,138 Q398,160 404,200 M380,146 Q394,168 398,205 M381,156 Q392,175 394,200 M386,134 Q410,150 420,186 M415,330 Q405,360 430,362" stroke="#8a2020" stroke-width="0.55" fill="none"/><path d="M421,151 L433,151 L427,163 Z" fill="#30e0d0" stroke="#902020" stroke-width="0.7"/><circle cx="427" cy="156" r="1.6" fill="#c02020"/><path d="M427,163 L440,200" stroke="#e0d000" stroke-width="1.2"/><path d="M446,252.5 H461 M453.5,241 V258" stroke="#e04040" stroke-width="0.6"/><path d="M453.5,241 V258" stroke="#40d080" stroke-width="0.6"/><path d="M492,215 L510,200 M495,240 L520,215 M492,295 L515,270 M495,330 L520,300 M470,350 L485,370 M440,352 L452,370" stroke="#e8f0f0" stroke-width="1" fill="none"/><path d="M505,205 L524,212 L510,225 Z" fill="#f4f8f8"/><rect x="451.7" y="138" width="67.8" height="42.3" fill="#ffffff" stroke="#b8b8b8" stroke-width="0.8"/><rect x="452" y="138.3" width="67" height="3" fill="#e6e6e6"/><text x="453" y="140.9" font-size="2.2" fill="#333" font-family="Liberation Sans">Throughput(DL) - Wi-Fi 6 5GHz</text><defs><linearGradient id="lg1" x1="0" y1="0" x2="0" y2="1"><stop offset="0" stop-color="#ff1010"/><stop offset="0.2" stop-color="#ff8800"/><stop offset="0.35" stop-color="#eeee00"/><stop offset="0.55" stop-color="#20e030"/><stop offset="0.75" stop-color="#20d0e0"/><stop offset="1" stop-color="#1020f0"/></linearGradient></defs><rect x="452.6" y="142.5" width="2.6" height="34.5" fill="url(#lg1)"/><rect x="498.8" y="131.5" width="21" height="7.5" fill="#f2f2f2" stroke="#cfcfcf" stroke-width="0.5"/><rect x="499.3" y="132" width="5" height="6.5" fill="#d0d8e0"/><text x="506" y="137" font-size="3" font-weight="bold" fill="#111" font-family="Liberation Sans">Network</text><circle cx="507.8" cy="350.6" r="8.2" fill="none" stroke="#202020" stroke-width="0.8"/><path d="M507.8,343 L509,351 L507.8,358 L506.6,351 Z" fill="#111"/><path d="M507.8,351 L509,351 L507.8,358 Z" fill="#c02020"/><rect x="379" y="124.6" width="145" height="0.8" fill="#7a2a8a"/></svg><div class="a" style="left:525px;top:115px;width:103px;height:254px;background:#252525;border-left:0.8px solid #3a3a3a;"></div><div class="a" style="left:525.5px;top:115.6px;width:102px;height:9.4px;background:#2d2d2d;border-top:0.8px solid #454545;"></div><div class="t" style="left:527.3px;top:118.35px;font-size:6.70px;line-height:6.70px;color:#ffffff;font-weight:bold;transform:scaleX(0.706);transform-origin:0 50%;">System Explorer</div><div class="a" style="left:614.3px;top:119px;width:3px;height:0.6px;background:#bbb;"></div><div class="a" style="left:615.4px;top:119px;width:0.7px;height:3.6px;background:#bbb;"></div><svg style="left:620.5px;top:118.5px" width="5" height="5"><path d="M0.7,0.7 L3.8,3.8 M3.8,0.7 L0.7,3.8" stroke="#ddd" stroke-width="0.7"/></svg><div class="a" style="left:526px;top:126.5px;width:101.5px;height:228.5px;background:#242424;border:0.8px solid #3a3a3a;"></div><svg style="left:526px;top:126px" width="102" height="230" viewBox="526 126 102 230"><g stroke="#7a7a7a" stroke-width="0.6" fill="none" stroke-dasharray="0.8,0.6"><path d="M531,131 V140 M531,131 H534 M531,140 H534 M539.7,140 V324 M539.7,149 H543 M539.7,158 H543 M539.7,176.7 H543 M539.7,185.8 H543 M539.7,195.2 H543 M539.7,315 H543 M539.7,324 H543 M548,158 V167.4 H551 M548,195 V241 M548,204.3 H551 M548,213.4 H551 M548,222.6 H551 M548,231.8 H551 M548,241 H551 M558,241 V305.4 M558,250.3 H561 M558,259.4 H561 M558,268.7 H561 M558,277.8 H561 M558,287 H561 M558,296.1 H561 M558,305.4 H561"/></g></svg><div class="t" style="left:529px;top:129.35px;font-size:5px;line-height:5px;letter-spacing:0px;color:#bbb;">&#8250;</div><svg style="left:535.5px;top:127.6px" width="6" height="6"><path d="M0.5,2 H2 L4.5,0.3 V5.7 L2,4 H0.5 Z" fill="#ddd"/><path d="M5.2,1.2 Q6.2,3 5.2,4.8" stroke="#ccc" stroke-width="0.5" fill="none"/></svg><div class="t" style="left:544.5px;top:128.37px;font-size:5.46px;line-height:5.46px;color:#e8e8e8;font-weight:bold;transform:scaleX(0.760);transform-origin:0 50%;">WiFi 802.11ax - 2.4GHz - 20MHz</div><div class="t" style="left:529.3px;top:139.07px;font-size:4px;line-height:4px;letter-spacing:0px;color:#bbb;">&#8964;</div><svg style="left:535.5px;top:136.7px" width="6" height="6"><path d="M0.5,2 H2 L4.5,0.3 V5.7 L2,4 H0.5 Z" fill="#ddd"/><path d="M5.2,1.2 Q6.2,3 5.2,4.8" stroke="#ccc" stroke-width="0.5" fill="none"/></svg><div class="t" style="left:544.5px;top:137.47px;font-size:5.46px;line-height:5.46px;color:#e8e8e8;font-weight:bold;transform:scaleX(0.766);transform-origin:0 50%;">WiFi 802.11ax - 5GHz - 40MHz</div><div class="t" style="left:537.5px;top:147.85px;font-size:5px;line-height:5px;letter-spacing:0px;color:#bbb;">&#8250;</div><svg style="left:544.5px;top:145.6px" width="6" height="7"><circle cx="3" cy="2.8" r="2.3" fill="none" stroke="#c8c8c8" stroke-width="0.6"/><circle cx="3" cy="2.8" r="0.9" fill="#aaa"/><path d="M1.5,5 L3,6.8 L4.5,5" fill="#bbb"/></svg><div class="t" style="left:553.8px;top:146.87px;font-size:5.46px;line-height:5.46px;color:#ececec;transform:scaleX(0.710);transform-origin:0 50%;">Signal Sources</div><div class="t" style="left:537.8px;top:157.67px;font-size:4px;line-height:4px;letter-spacing:0px;color:#bbb;">&#8964;</div><div class="a" style="left:545px;top:154.8px;width:4.5px;height:7px;background:#555;border:0.6px solid #999;"></div><div class="t" style="left:553.8px;top:156.07px;font-size:5.46px;line-height:5.46px;color:#ececec;transform:scaleX(0.710);transform-origin:0 50%;">Wired Link Budget</div><div class="t" style="left:537.5px;top:175.45px;font-size:5px;line-height:5px;letter-spacing:0px;color:#bbb;">&#8250;</div><svg style="left:544.5px;top:173.2px" width="6" height="7"><circle cx="3" cy="2" r="1.6" fill="none" stroke="#ddd" stroke-width="0.7"/><path d="M0.5,6.5 Q3,2.5 5.5,6.5 Z" fill="none" stroke="#ddd" stroke-width="0.7"/></svg><div class="t" style="left:553.8px;top:174.47px;font-size:5.46px;line-height:5.46px;color:#ececec;transform:scaleX(0.710);transform-origin:0 50%;">User Configuration</div><div class="a" style="left:545.5px;top:182.60000000000002px;width:4px;height:6.5px;background:#444;border:0.8px solid #ccc;border-radius:1.5px;"></div><div class="t" style="left:553.8px;top:183.57px;font-size:5.46px;line-height:5.46px;color:#ececec;transform:scaleX(0.710);transform-origin:0 50%;">Traffic Maps</div><div class="t" style="left:537.8px;top:194.57px;font-size:4px;line-height:4px;letter-spacing:0px;color:#bbb;">&#8964;</div><svg style="left:544.5px;top:191.7px" width="6" height="7"><circle cx="3" cy="2.8" r="2.3" fill="none" stroke="#c8c8c8" stroke-width="0.6"/><circle cx="3" cy="2.8" r="0.9" fill="#aaa"/><path d="M1.5,5 L3,6.8 L4.5,5" fill="#bbb"/></svg><div class="t" style="left:553.8px;top:192.97px;font-size:5.46px;line-height:5.46px;color:#ececec;transform:scaleX(0.710);transform-origin:0 50%;">Predictions</div><svg style="left:544.5px;top:311.6px" width="6" height="7"><circle cx="3" cy="2.8" r="2.3" fill="none" stroke="#c8c8c8" stroke-width="0.6"/><circle cx="3" cy="2.8" r="0.9" fill="#aaa"/><path d="M1.5,5 L3,6.8 L4.5,5" fill="#bbb"/></svg><div class="t" style="left:553.8px;top:312.87px;font-size:5.46px;line-height:5.46px;color:#ececec;transform:scaleX(0.710);transform-origin:0 50%;">Simulations</div><svg style="left:544.5px;top:321.2px" width="6" height="6"><path d="M0.5,0.5 H5.5 L3.5,3 V5.5 H2.5 V3 Z" fill="#ddd"/></svg><div class="t" style="left:553.8px;top:321.97px;font-size:5.46px;line-height:5.46px;color:#ececec;transform:scaleX(0.710);transform-origin:0 50%;">Measurements</div><div class="t" style="left:546.8px;top:166.15px;font-size:5px;line-height:5px;letter-spacing:0px;color:#bbb;">&#8250;</div><div class="a" style="left:552px;top:164.8px;width:5px;height:5px;background:#3cc83c;border:0.5px solid #8f8;"></div><div class="t" style="left:562.5px;top:165.17px;font-size:5.46px;line-height:5.46px;color:#ececec;transform:scaleX(0.710);transform-origin:0 50%;">Wi-Fi 6 5GHz 40MHz CH36</div><div class="t" style="left:546.8px;top:203.05px;font-size:5px;line-height:5px;letter-spacing:0px;color:#bbb;">&#8250;</div><div class="a" style="left:552.3px;top:201.9px;width:4.8px;height:4.8px;background:transparent;border:0.6px solid #999;border-radius:50%;"></div><svg style="left:562.5px;top:200.8px" width="6" height="7"><circle cx="3" cy="2.8" r="2.3" fill="none" stroke="#c8c8c8" stroke-width="0.6"/><circle cx="3" cy="2.8" r="0.9" fill="#aaa"/><path d="M1.5,5 L3,6.8 L4.5,5" fill="#bbb"/></svg><div class="t" style="left:571.6px;top:202.07px;font-size:5.46px;line-height:5.46px;color:#ececec;transform:scaleX(0.710);transform-origin:0 50%;">RSSI - Wi-Fi 6 5GHz</div><div class="t" style="left:546.8px;top:212.15px;font-size:5px;line-height:5px;letter-spacing:0px;color:#bbb;">&#8250;</div><div class="a" style="left:552.3px;top:211.0px;width:4.8px;height:4.8px;background:transparent;border:0.6px solid #999;border-radius:50%;"></div><svg style="left:562.5px;top:209.9px" width="6" height="7"><circle cx="3" cy="2.8" r="2.3" fill="none" stroke="#c8c8c8" stroke-width="0.6"/><circle cx="3" cy="2.8" r="0.9" fill="#aaa"/><path d="M1.5,5 L3,6.8 L4.5,5" fill="#bbb"/></svg><div class="t" style="left:571.6px;top:211.17px;font-size:5.46px;line-height:5.46px;color:#ececec;transform:scaleX(0.710);transform-origin:0 50%;">SINR(DL) - Wi-Fi 6 5GHz</div><div class="t" style="left:546.8px;top:221.35px;font-size:5px;line-height:5px;letter-spacing:0px;color:#bbb;">&#8250;</div><div class="a" style="left:552.3px;top:220.2px;width:4.8px;height:4.8px;background:#3ef03e;border-radius:50%;box-shadow:0 0 0 0.6px #bfb;"></div><svg style="left:562.5px;top:219.1px" width="6" height="7"><circle cx="3" cy="2.8" r="2.3" fill="none" stroke="#c8c8c8" stroke-width="0.6"/><circle cx="3" cy="2.8" r="0.9" fill="#aaa"/><path d="M1.5,5 L3,6.8 L4.5,5" fill="#bbb"/></svg><div class="t" style="left:571.6px;top:220.37px;font-size:5.46px;line-height:5.46px;color:#ececec;transform:scaleX(0.710);transform-origin:0 50%;">Throughput(DL) - Wi-Fi 6 5GHz</div><div class="t" style="left:546.8px;top:230.55px;font-size:5px;line-height:5px;letter-spacing:0px;color:#bbb;">&#8250;</div><div class="a" style="left:552.3px;top:229.4px;width:4.8px;height:4.8px;background:transparent;border:0.6px solid #999;border-radius:50%;"></div><svg style="left:562.5px;top:228.3px" width="6" height="7"><circle cx="3" cy="2.8" r="2.3" fill="none" stroke="#c8c8c8" stroke-width="0.6"/><circle cx="3" cy="2.8" r="0.9" fill="#aaa"/><path d="M1.5,5 L3,6.8 L4.5,5" fill="#bbb"/></svg><div class="t" style="left:571.6px;top:229.57px;font-size:5.46px;line-height:5.46px;color:#ececec;transform:scaleX(0.710);transform-origin:0 50%;">MCS (DL) - Wi-Fi 6 5GHz</div><div class="t" style="left:546.8px;top:239.75px;font-size:5px;line-height:5px;letter-spacing:0px;color:#bbb;">&#8250;</div><div class="a" style="left:552.3px;top:238.6px;width:4.8px;height:4.8px;background:transparent;border:0.6px solid #999;border-radius:50%;"></div><svg style="left:562.5px;top:237.5px" width="6" height="7"><circle cx="3" cy="2.8" r="2.3" fill="none" stroke="#c8c8c8" stroke-width="0.6"/><circle cx="3" cy="2.8" r="0.9" fill="#aaa"/><path d="M1.5,5 L3,6.8 L4.5,5" fill="#bbb"/></svg><div class="t" style="left:571.6px;top:238.77px;font-size:5.46px;line-height:5.46px;color:#ececec;transform:scaleX(0.710);transform-origin:0 50%;">Modulation (DL) - Wi-Fi 6 5G...</div><div class="a" style="left:561.8px;top:248.0px;width:4.6px;height:4.6px;background:#30b030;border:0.5px solid #6c6;"></div><svg style="left:562.3px;top:248.3px" width="4" height="4"><path d="M0.7,2 L1.7,3 L3.3,1" stroke="#fff" stroke-width="0.6" fill="none"/></svg><div class="a" style="left:570.9px;top:246.60000000000002px;width:6.4px;height:7.4px;background:#ff0000;"></div><div class="t" style="left:581px;top:248.07px;font-size:5.46px;line-height:5.46px;color:#ececec;transform:scaleX(0.710);transform-origin:0 50%;">4096-QAM</div><div class="a" style="left:561.8px;top:257.18px;width:4.6px;height:4.6px;background:#30b030;border:0.5px solid #6c6;"></div><svg style="left:562.3px;top:257.48px" width="4" height="4"><path d="M0.7,2 L1.7,3 L3.3,1" stroke="#fff" stroke-width="0.6" fill="none"/></svg><div class="a" style="left:570.9px;top:255.78000000000003px;width:6.4px;height:7.4px;background:#ffc000;"></div><div class="t" style="left:581px;top:257.25px;font-size:5.46px;line-height:5.46px;color:#ececec;transform:scaleX(0.710);transform-origin:0 50%;">1024-QAM</div><div class="a" style="left:561.8px;top:266.36px;width:4.6px;height:4.6px;background:#30b030;border:0.5px solid #6c6;"></div><svg style="left:562.3px;top:266.66px" width="4" height="4"><path d="M0.7,2 L1.7,3 L3.3,1" stroke="#fff" stroke-width="0.6" fill="none"/></svg><div class="a" style="left:570.9px;top:264.96000000000004px;width:6.4px;height:7.4px;background:#c8f000;"></div><div class="t" style="left:581px;top:266.43px;font-size:5.46px;line-height:5.46px;color:#ececec;transform:scaleX(0.710);transform-origin:0 50%;">256-QAM</div><div class="a" style="left:561.8px;top:275.54px;width:4.6px;height:4.6px;background:#30b030;border:0.5px solid #6c6;"></div><svg style="left:562.3px;top:275.84000000000003px" width="4" height="4"><path d="M0.7,2 L1.7,3 L3.3,1" stroke="#fff" stroke-width="0.6" fill="none"/></svg><div class="a" style="left:570.9px;top:274.14000000000004px;width:6.4px;height:7.4px;background:#10f020;"></div><div class="t" style="left:581px;top:275.61px;font-size:5.46px;line-height:5.46px;color:#ececec;transform:scaleX(0.710);transform-origin:0 50%;">64-QAM</div><div class="a" style="left:561.8px;top:284.71999999999997px;width:4.6px;height:4.6px;background:#30b030;border:0.5px solid #6c6;"></div><svg style="left:562.3px;top:285.02px" width="4" height="4"><path d="M0.7,2 L1.7,3 L3.3,1" stroke="#fff" stroke-width="0.6" fill="none"/></svg><div class="a" style="left:570.9px;top:283.32px;width:6.4px;height:7.4px;background:#10f0b0;"></div><div class="t" style="left:581px;top:284.79px;font-size:5.46px;line-height:5.46px;color:#ececec;transform:scaleX(0.710);transform-origin:0 50%;">16-QAM</div><div class="a" style="left:561.8px;top:293.9px;width:4.6px;height:4.6px;background:#30b030;border:0.5px solid #6c6;"></div><svg style="left:562.3px;top:294.2px" width="4" height="4"><path d="M0.7,2 L1.7,3 L3.3,1" stroke="#fff" stroke-width="0.6" fill="none"/></svg><div class="a" style="left:570.9px;top:292.5px;width:6.4px;height:7.4px;background:#10d0f8;"></div><div class="t" style="left:581px;top:293.97px;font-size:5.46px;line-height:5.46px;color:#ececec;transform:scaleX(0.710);transform-origin:0 50%;">QPSK</div><div class="a" style="left:561.8px;top:303.08px;width:4.6px;height:4.6px;background:#30b030;border:0.5px solid #6c6;"></div><svg style="left:562.3px;top:303.38px" width="4" height="4"><path d="M0.7,2 L1.7,3 L3.3,1" stroke="#fff" stroke-width="0.6" fill="none"/></svg><div class="a" style="left:570.9px;top:301.68px;width:6.4px;height:7.4px;background:#0010f0;"></div><div class="t" style="left:581px;top:303.15px;font-size:5.46px;line-height:5.46px;color:#ececec;transform:scaleX(0.710);transform-origin:0 50%;">BPSK</div><div class="a" style="left:526.5px;top:357.5px;width:24.5px;height:9.5px;background:#262626;border:0.7px solid #444;"></div><div class="a" style="left:528.0px;top:359.8px;width:4px;height:4px;background:transparent;border:0.6px solid #bbb;border-radius:50%;"></div><div class="t" style="left:532.7px;top:360.93px;font-size:5.33px;line-height:5.33px;color:#d8d8d8;transform:scaleX(0.710);transform-origin:0 50%;">Properties</div><div class="a" style="left:551.5px;top:357.5px;width:25px;height:9.5px;background:#262626;border:0.7px solid #444;"></div><div class="a" style="left:553.0px;top:359.8px;width:4px;height:4px;background:transparent;border:0.6px solid #bbb;border-radius:50%;"></div><div class="t" style="left:557.7px;top:360.93px;font-size:5.33px;line-height:5.33px;color:#d8d8d8;transform:scaleX(0.710);transform-origin:0 50%;">Project ...</div><div class="a" style="left:577.5px;top:357.5px;width:23.5px;height:9.5px;background:#262626;border:0.7px solid #444;"></div><div class="a" style="left:579.0px;top:359.8px;width:4px;height:4px;background:transparent;border:0.6px solid #bbb;border-radius:50%;"></div><div class="t" style="left:583.7px;top:360.93px;font-size:5.33px;line-height:5.33px;color:#d8d8d8;transform:scaleX(0.710);transform-origin:0 50%;">System ...</div><div class="a" style="left:601.5px;top:357.5px;width:25px;height:9.5px;background:#262626;border:0.7px solid #444;"></div><div class="a" style="left:603.0px;top:359.8px;width:4px;height:4px;background:transparent;border:0.6px solid #bbb;border-radius:50%;"></div><div class="t" style="left:607.7px;top:360.93px;font-size:5.33px;line-height:5.33px;color:#d8d8d8;transform:scaleX(0.710);transform-origin:0 50%;">Layer M...</div><div class="a" style="left:83px;top:369px;width:545px;height:24px;background:#262626;"></div><div class="a" style="left:83.5px;top:369.5px;width:278px;height:11.5px;background:#2a2a2a;"></div><div class="a" style="left:362px;top:369.5px;width:265.5px;height:11.5px;background:#2c2c2c;"></div><div class="t" style="left:86.5px;top:373.30px;font-size:6.20px;line-height:6.20px;color:#ffffff;font-weight:bold;transform:scaleX(0.745);transform-origin:0 50%;">Tasks</div><div class="t" style="left:364px;top:373.80px;font-size:6.20px;line-height:6.20px;color:#ffffff;font-weight:bold;transform:scaleX(0.770);transform-origin:0 50%;">Message List</div><div class="a" style="left:340.5px;top:373.3px;width:3.8px;height:3.8px;background:transparent;border:0.7px solid #bbb;border-radius:50%;"></div><div class="a" style="left:347.5px;top:373px;width:2.6px;height:0.7px;background:#bbb;"></div><div class="a" style="left:348.4px;top:373px;width:0.8px;height:4px;background:#bbb;"></div><svg style="left:353.0px;top:373.2px" width="4.0" height="4.0" viewBox="-2.0 -2.0 4.0 4.0"><path d="M-1.5,-1.5 L1.5,1.5 M1.5,-1.5 L-1.5,1.5" stroke="#ccc" stroke-width="0.7"/></svg><div class="a" style="left:607.5px;top:373.3px;width:3.8px;height:3.8px;background:transparent;border:0.7px solid #bbb;border-radius:50%;"></div><div class="a" style="left:614.5px;top:373px;width:2.6px;height:0.7px;background:#bbb;"></div><div class="a" style="left:615.4px;top:373px;width:0.8px;height:4px;background:#bbb;"></div><svg style="left:620.0px;top:373.2px" width="4.0" height="4.0" viewBox="-2.0 -2.0 4.0 4.0"><path d="M-1.5,-1.5 L1.5,1.5 M1.5,-1.5 L-1.5,1.5" stroke="#ccc" stroke-width="0.7"/></svg><div class="a" style="left:83.5px;top:381.2px;width:544px;height:1px;background:#454545;"></div><div class="a" style="left:83.5px;top:382.2px;width:544px;height:10.8px;background:#222;"></div><div class="a" style="left:86px;top:388px;width:8.5px;height:5px;background:#f0f0f0;"></div><div class="t" style="left:87px;top:389.40px;font-size:5.00px;line-height:5.00px;color:#555;transform:scaleX(0.710);transform-origin:0 50%;">Staff</div><div class="a" style="left:227.0px;top:383.8px;width:6.4px;height:8.2px;background:#3a3548;border:0.7px solid #4c9a4c;border-radius:1px;"></div><svg style="left:227.2px;top:384.9px" width="6" height="6" viewBox="-3 -3 6 6"><path d="M-1.5,2.5 L0,-2.2 L1.5,2.5 M-1,1 H1" stroke="#b8b8b8" stroke-width="0.8" fill="none"/></svg><svg style="left:234.5px;top:384.9px" width="6" height="6" viewBox="-3 -3 6 6"><rect x="-2" y="-2" width="4" height="4" fill="#777"/><path d="M-2,0 H2 M0,-2 V2" stroke="#333" stroke-width="0.5"/></svg><svg style="left:241.8px;top:384.9px" width="6" height="6" viewBox="-3 -3 6 6"><rect x="-2.2" y="-2.2" width="4.4" height="4.4" fill="none" stroke="#999" stroke-width="0.6"/><rect x="-0.8" y="-0.2" width="1.6" height="1.6" fill="#ccc"/></svg><svg style="left:248.5px;top:384.9px" width="6" height="6" viewBox="-3 -3 6 6"><path d="M-2,2 L2,-2 M0.5,-2 H2 V-0.5" stroke="#c8c8c8" stroke-width="0.8" fill="none"/></svg><div class="a" style="left:256.1px;top:383.8px;width:6.4px;height:8.2px;background:#3a3548;border:0.7px solid #4c9a4c;border-radius:1px;"></div><svg style="left:256.3px;top:384.9px" width="6" height="6" viewBox="-3 -3 6 6"><path d="M-1.5,2.5 L0,-2.2 L1.5,2.5" stroke="#c0c0c0" stroke-width="0.8" fill="none"/><circle cx="0" cy="-1.5" r="0.9" fill="#ddd"/></svg><div class="a" style="left:263.1px;top:383.8px;width:6.4px;height:8.2px;background:#3a3548;border:0.7px solid #4c9a4c;border-radius:1px;"></div><svg style="left:263.3px;top:384.9px" width="6" height="6" viewBox="-3 -3 6 6"><path d="M-1.8,-2 L1.8,0 L-0.3,0.5 L0.8,2.5" stroke="#c8c8c8" stroke-width="0.8" fill="none"/></svg><svg style="left:271px;top:384.9px" width="6" height="6" viewBox="-3 -3 6 6"><path d="M-2.2,-2 H2.2 L0.6,0.3 V2.5 H-0.6 V0.3 Z" fill="#d0d0d0"/></svg><svg style="left:278px;top:384.9px" width="6" height="6" viewBox="-3 -3 6 6"><circle cx="-0.4" cy="-0.4" r="1.7" fill="none" stroke="#999" stroke-width="0.7"/><path d="M0.8,0.8 L2.3,2.3" stroke="#999" stroke-width="0.9"/></svg><svg style="left:285px;top:384.9px" width="6" height="6" viewBox="-3 -3 6 6"><circle cx="-0.4" cy="-0.4" r="1.7" fill="none" stroke="#999" stroke-width="0.7"/><path d="M0.8,0.8 L2.3,2.3" stroke="#999" stroke-width="0.9"/></svg><svg style="left:293px;top:384.9px" width="6" height="6" viewBox="-3 -3 6 6"><circle cx="-0.4" cy="-0.4" r="1.7" fill="none" stroke="#aaa" stroke-width="0.7"/><path d="M0.8,0.8 L2.3,2.3" stroke="#aaa" stroke-width="0.9"/></svg><svg style="left:300px;top:384.9px" width="6" height="6" viewBox="-3 -3 6 6"><rect x="-2.2" y="-2.5" width="4.4" height="5" rx="0.5" fill="#6a6a6a"/><path d="M-1.2,-1 H1.2 M-1.2,0.5 H1.2" stroke="#aaa" stroke-width="0.5"/></svg><div class="t" style="left:331px;top:386.80px;font-size:5.21px;line-height:5.21px;color:#e0e0e0;transform:scaleX(0.761);transform-origin:0 50%;">X: 0m, Y: 0m, Z: 17.82m | Lat: 0, Lon: 0</div><div class="t" style="left:547.5px;top:386.73px;font-size:5.33px;line-height:5.33px;color:#e0e0e0;transform:scaleX(0.788);transform-origin:0 50%;">138.00 Mbps</div><div class="t" style="left:599px;top:386.73px;font-size:5.33px;line-height:5.33px;color:#d8d8d8;transform:scaleX(0.710);transform-origin:0 50%;">Meters</div>
</body></html>
